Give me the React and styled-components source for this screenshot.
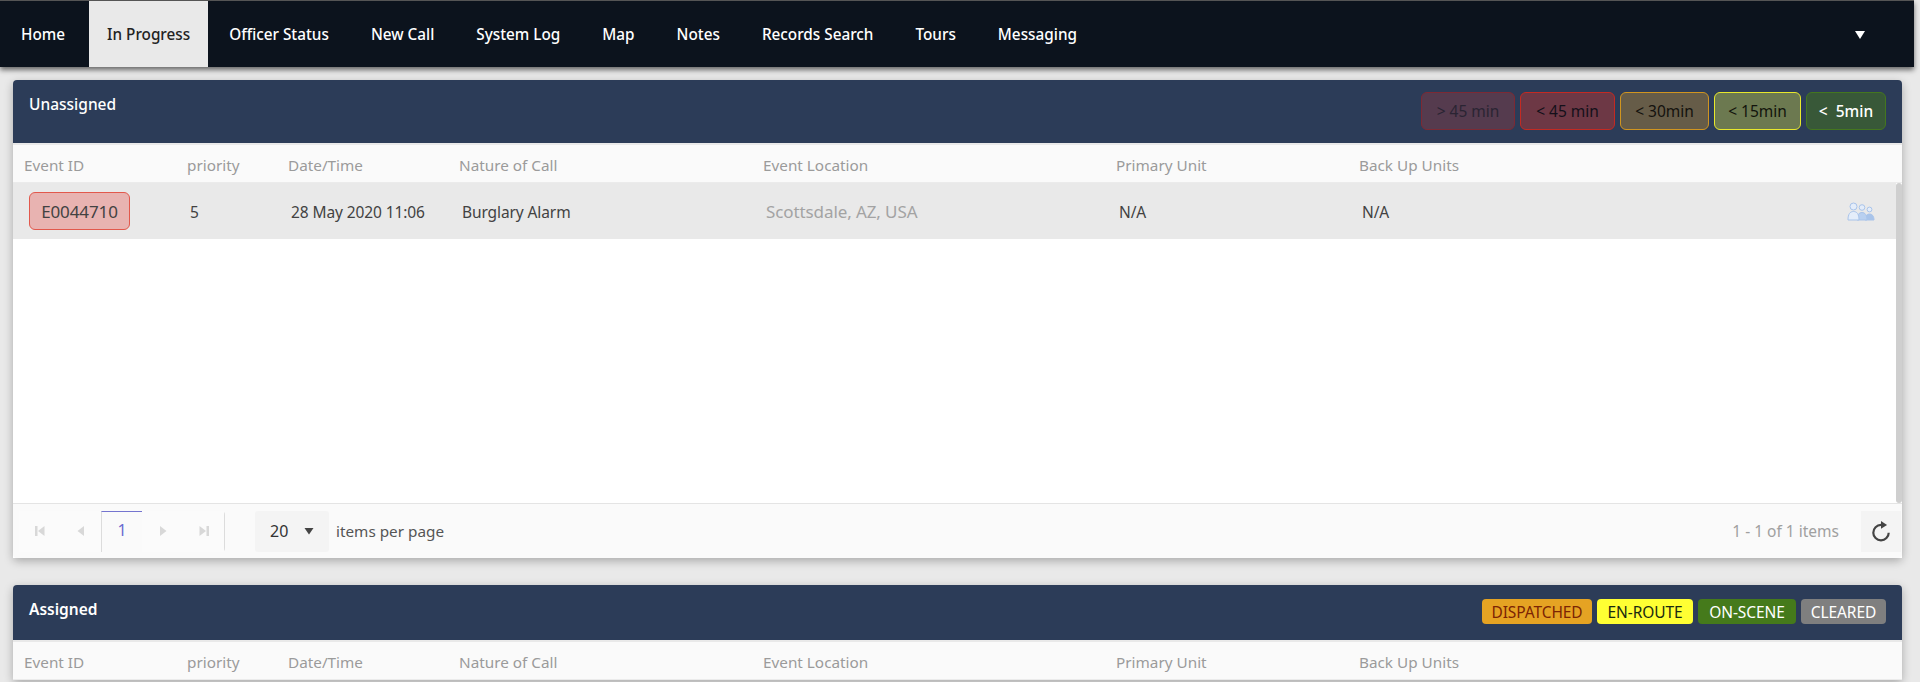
import React from 'react';
import styled, { createGlobalStyle } from 'styled-components';

const GlobalStyle = createGlobalStyle`
    html, body {
        margin: 0;
        padding: 0;
        height: 682px;
        overflow: hidden;
        background: #e9e9e9;
        font-family: "Noto Sans", "Open Sans", Arial, sans-serif;
        font-size: 14px;
        color: #424242;
    }
    * { box-sizing: border-box; }
`;

const Page = styled.div`
    width: 1920px;
    height: 682px;
    overflow: hidden;
`;

// top navigation
const NavBar = styled.nav`
    display: flex;
    align-items: stretch;
    width: 1914px;
    height: 67px;
    border-top: 1px solid #555;
    background: #0c131d;
    box-shadow: 0 3px 5px rgba(0, 0, 0, 0.55);
`;

const NavItem = styled.a`
    display: flex;
    align-items: center;
    margin-left: ${(p) => (p.$active ? '3px' : '0')};
    padding: 0 ${(p) => (p.$active ? '18px' : '21px')};
    background: ${(p) => (p.$active ? '#e9e9e9' : 'transparent')};
    color: ${(p) => (p.$active ? '#222' : '#fff')};
    font-size: 15.3px;
    font-weight: 500;
    white-space: nowrap;
`;

const NavArrow = styled.svg`
    width: 10px;
    height: 8px;
    margin: 2px 49px 0 auto;
    align-self: center;
`;

const Main = styled.main`
    display: flex;
    flex-direction: column;
    gap: 27px;
    width: 1889px;
    margin: 13px 0 0 13px;
`;

const Panel = styled.section`
    border-radius: 4px;
    box-shadow: 0 3px 10px rgba(0, 0, 0, 0.28);
`;

const PanelHead = styled.header`
    display: flex;
    justify-content: space-between;
    align-items: flex-start;
    height: ${(p) => p.$height}px;
    padding: ${(p) => p.$padTop}px 16px 0 16px;
    background: #2c3c58;
    border-radius: 4px 4px 0 0;
`;

const PanelTitle = styled.h2`
    margin: ${(p) => p.$top}px 0 0;
    color: #fff;
    font-size: 15.5px;
    font-weight: ${(p) => (p.$bold ? 600 : 500)};
`;

const BadgeRow = styled.div`
    display: flex;
    gap: 5px;
`;

const TimeBadge = styled.span`
    display: flex;
    align-items: center;
    justify-content: center;
    width: ${(p) => p.$width}px;
    height: 38px;
    border: 1px solid ${(p) => p.$border};
    border-radius: 6px;
    background: ${(p) => p.$bg};
    color: ${(p) => p.$color};
    font-size: 15.5px;
    font-weight: ${(p) => (p.$bold ? 500 : 400)};
    white-space: pre;
`;

const StatusBadge = styled.span`
    display: flex;
    align-items: center;
    justify-content: center;
    width: ${(p) => p.$width}px;
    height: 25px;
    border-radius: 4px;
    background: ${(p) => p.$bg};
    color: ${(p) => p.$color};
    font-size: 15.5px;
    letter-spacing: -0.1px;
`;

const Grid = styled.div`
    margin-top: 2px;
    background: #fff;
    border-radius: 4px 4px 0 0;
`;

const Row = styled.div`
    display: grid;
    grid-template-columns: 163px 101px 171px 304px 353px 243px 1fr 60px;
    align-items: center;
`;

const HeadRow = styled(Row)`
    height: 38px;
    padding: 2px 0 0 11px;
    background: #fafafa;
    border-bottom: 1px solid #ebebeb;
    color: #9b9b9b;
    font-size: 15.3px;
`;

const Body = styled.div`
    display: flex;
    height: 320px;
    background: #fff;
`;

const BodyRows = styled.div`
    flex: 1;
`;

const ScrollTrack = styled.div`
    width: 6px;
    background: #cfcfcf;
    border-radius: 3px;
`;

const DataRow = styled(Row)`
    height: 56px;
    padding-left: 11px;
    background: #e9e9e9;
    font-size: 15.5px;
    letter-spacing: -0.1px;
    color: #424242;
`;

const Cell = styled.span`
    padding: 1px 0 0 3px;
    color: ${(p) => (p.$muted ? '#a3a3a3' : 'inherit')};
    font-size: ${(p) => (p.$muted ? '17px' : 'inherit')};
    white-space: nowrap;
`;

const EventTag = styled.span`
    display: flex;
    align-items: center;
    justify-content: center;
    width: 101px;
    height: 38px;
    margin-left: 5px;
    border: 1px solid #e2584c;
    border-radius: 6px;
    background: #e8b3b1;
    color: #424242;
    font-size: 17px;
`;

const GroupIcon = styled.svg`
    width: 28px;
    height: 19px;
    justify-self: start;
    margin-left: 11px;
`;

const Pager = styled.footer`
    display: flex;
    align-items: center;
    height: 55px;
    padding: 0 1px 0 6px;
    background: #fafafa;
    border-top: 1px solid #e4e4e4;
    border-radius: 0 0 4px 4px;
`;

const PagerGroup = styled.div`
    display: flex;
    height: 41px;
    border-right: 1px solid #dcdcdc;
    border-radius: 0 4px 4px 0;
`;

const PageBtn = styled.span`
    display: flex;
    align-items: center;
    justify-content: center;
    width: 41px;
    height: 41px;
    padding-bottom: ${(p) => (p.$active ? '3px' : '0')};
    background: ${(p) => (p.$active ? '#fafafa' : '#fbfbfb')};
    border-top: ${(p) => (p.$active ? '1px solid #7474cf' : 'none')};
    border-left: ${(p) => (p.$active ? '1px solid #dcdcdc' : 'none')};
    color: #6a6ad0;
    font-size: 16px;
`;

const PageSize = styled.div`
    display: flex;
    align-items: center;
    justify-content: space-between;
    width: 74px;
    height: 41px;
    margin-left: 30px;
    padding: 0 13px 0 15px;
    background: #f4f4f4;
    border-radius: 3px;
    color: #333;
    font-size: 16px;
`;

const PerPage = styled.span`
    margin-left: 7px;
    color: #555;
    font-size: 15.3px;
`;

const ItemCount = styled.span`
    margin-left: auto;
    margin-right: 22px;
    color: #a0a0a0;
    font-size: 15.5px;
`;

const RefreshBtn = styled.span`
    display: flex;
    align-items: center;
    justify-content: center;
    width: 40px;
    height: 41px;
    background: #f4f4f4;
`;

const navItems = ['Home', 'In Progress', 'Officer Status', 'New Call', 'System Log', 'Map', 'Notes', 'Records Search', 'Tours', 'Messaging'];
const columns = ['Event ID', 'priority', 'Date/Time', 'Nature of Call', 'Event Location', 'Primary Unit', 'Back Up Units', ''];

const timeBadges = [
    { label: '> 45 min', width: 94, border: '#7d2a34', bg: '#553b4e', color: '#2a2433' },
    { label: '< 45 min', width: 95, border: '#c42a22', bg: '#6d3845', color: '#14101a' },
    { label: '< 30min', width: 89, border: '#d1951f', bg: '#665c48', color: '#14120e' },
    { label: '< 15min', width: 87, border: '#e8e82c', bg: '#6c7950', color: '#12140c' },
    { label: '<  5min', width: 80, border: '#44761f', bg: '#385838', color: '#fff', bold: true },
];

const statusBadges = [
    { label: 'DISPATCHED', width: 110, bg: '#e5a323', color: '#7c2404' },
    { label: 'EN-ROUTE', width: 96, bg: '#ffff33', color: '#1a2a10' },
    { label: 'ON-SCENE', width: 98, bg: '#457a1b', color: '#fff' },
    { label: 'CLEARED', width: 85, bg: '#7f7f7f', color: '#fff' },
];

function HeaderRow() {
    return (
        <HeadRow>
            {columns.map((c, i) => (
                <span key={i}>{c}</span>
            ))}
        </HeadRow>
    );
}

function PagerIcon({ d, color = '#d8d8d8' }) {
    return (
        <svg width="14" height="14" viewBox="0 0 14 14">
            <path d={d} fill={color} />
        </svg>
    );
}

export default function App() {
    return (
        <Page>
            <GlobalStyle />
            <NavBar>
                {navItems.map((item) => (
                    <NavItem key={item} $active={item === 'In Progress'}>{item}</NavItem>
                ))}
                <NavArrow viewBox="0 0 10 8">
                    <path d="M0 0h10L5 8z" fill="#fff" />
                </NavArrow>
            </NavBar>

            <Main>
                <Panel>
                    <PanelHead $height={63} $padTop={12}>
                        <PanelTitle $top={1}>Unassigned</PanelTitle>
                        <BadgeRow>
                            {timeBadges.map((b) => (
                                <TimeBadge key={b.label} $width={b.width} $border={b.border} $bg={b.bg} $color={b.color} $bold={b.bold}>
                                    {b.label}
                                </TimeBadge>
                            ))}
                        </BadgeRow>
                    </PanelHead>
                    <Grid>
                        <HeaderRow />
                        <Body>
                            <BodyRows>
                                <DataRow>
                                    <EventTag>E0044710</EventTag>
                                    <Cell>5</Cell>
                                    <Cell>28 May 2020 11:06</Cell>
                                    <Cell>Burglary Alarm</Cell>
                                    <Cell $muted>Scottsdale, AZ, USA</Cell>
                                    <Cell>N/A</Cell>
                                    <Cell>N/A</Cell>
                                    <GroupIcon viewBox="0 0 28 19">
                                        <g fill="#cfdff5" stroke="#a9c4ea" strokeWidth="1">
                                            <circle cx="22.5" cy="7.5" r="2.4" fill="#e4edfa" />
                                            <path d="M18 18c0-4 2-6 4.500-6s4.500 2 4.500 6z" fill="#a9c4ea" />
                                            <circle cx="15" cy="5.500" r="2.800" fill="#e4edfa" />
                                            <path d="M10 18c0-5 2-7.500 5-7.500s5 2.500 5 7.500z" fill="#b9d0f0" />
                                            <circle cx="6.500" cy="4.500" r="3.500" fill="#e4edfa" />
                                            <path d="M1 18c0-6 2-8.500 5.500-8.500s5.500 2.500 5.500 8.500z" fill="#e4edfa" />
                                        </g>
                                    </GroupIcon>
                                </DataRow>
                            </BodyRows>
                            <ScrollTrack />
                        </Body>
                        <Pager>
                            <PagerGroup>
                                <PageBtn><PagerIcon d="M2 2h2.500v10H2zM11.500 2v10L5 7z" /></PageBtn>
                                <PageBtn><PagerIcon d="M10 2v10L3.500 7z" /></PageBtn>
                                <PageBtn $active>1</PageBtn>
                                <PageBtn><PagerIcon d="M4 2v10l6.500-5z" /></PageBtn>
                                <PageBtn><PagerIcon d="M2.500 2v10L9 7zM9.500 2H12v10H9.500z" /></PageBtn>
                            </PagerGroup>
                            <PageSize>
                                20
                                <PagerIcon d="M2.500 4h9L7 10.500z" color="#444" />
                            </PageSize>
                            <PerPage>items per page</PerPage>
                            <ItemCount>1 - 1 of 1 items</ItemCount>
                            <RefreshBtn>
                                <svg width="22" height="22" viewBox="0 0 20 20" fill="none">
                                    <path d="M10 4.500A7 7 0 1 0 17 11.500" stroke="#444" strokeWidth="2" />
                                    <path d="M10 1v7l5.500-3.500z" fill="#444" />
                                </svg>
                            </RefreshBtn>
                        </Pager>
                    </Grid>
                </Panel>

                <Panel>
                    <PanelHead $height={55} $padTop={14}>
                        <PanelTitle $bold $top={-1}>Assigned</PanelTitle>
                        <BadgeRow>
                            {statusBadges.map((b) => (
                                <StatusBadge key={b.label} $width={b.width} $bg={b.bg} $color={b.color}>
                                    {b.label}
                                </StatusBadge>
                            ))}
                        </BadgeRow>
                    </PanelHead>
                    <Grid>
                        <HeaderRow />
                    </Grid>
                </Panel>
            </Main>
        </Page>
    );
}
